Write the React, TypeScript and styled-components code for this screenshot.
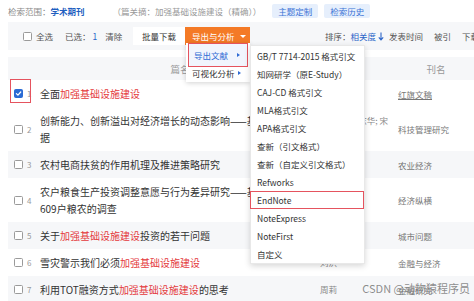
import React from 'react';
import styled, { createGlobalStyle } from 'styled-components';

const GlobalStyle = createGlobalStyle`
  html, body { margin: 0; padding: 0; background: #fff; }
  body {
    width: 474px; height: 301px; overflow: hidden;
    font-family: "Noto Sans CJK SC", "Noto Sans", sans-serif;
    color: #333;
  }
`;

const Page = styled.div`
  position: relative;
  width: 474px;
  height: 301px;
  overflow: hidden;
`;

/* ---------- top line ---------- */
const TopBar = styled.div`
  height: 22px;
  display: flex;
  align-items: center;
  padding-left: 8px;
  font-size: 8.5px;
  color: #8a8a8a;
  white-space: nowrap;
`;
const Scope = styled.span`
  color: #1f5fbf;
  font-weight: 700;
`;
const Query = styled.span`
  margin-left: 28px;
  color: #999;
`;
const TagButton = styled.span<{ $ml: number }>`
  display: inline-flex;
  align-items: center;
  height: 14px;
  padding: 0 6px;
  margin-left: ${p => p.$ml}px;
  background: #e6effc;
  color: #3b73d6;
  border-radius: 2px;
`;

/* ---------- toolbar ---------- */
const Toolbar = styled.div`
  margin-left: 8px;
  height: 28px;
  background: #f6f7f9;
  display: flex;
  align-items: center;
  padding-left: 15px;
  font-size: 8.5px;
  color: #555;
  white-space: nowrap;
`;
const SelectGroup = styled.div`
  width: 110px;
  flex-shrink: 0;
  display: flex;
  align-items: center;
`;
const Box = styled.span<{ $checked?: boolean }>`
  width: 9px;
  height: 9px;
  box-sizing: border-box;
  border: 1px solid ${p => (p.$checked ? '#2a6bd4' : '#9a9a9a')};
  background: ${p => (p.$checked ? '#2a6bd4' : '#fff')};
  border-radius: 1.5px;
  display: inline-flex;
  align-items: center;
  justify-content: center;
  flex-shrink: 0;
`;
const ToolText = styled.span<{ $ml?: number; $blue?: boolean }>`
  margin-left: ${p => p.$ml ?? 0}px;
  color: ${p => (p.$blue ? '#2a64c8' : '#555')};
`;
const BatchButton = styled.span`
  width: 52px;
  height: 18px;
  flex-shrink: 0;
  background: #fff;
  display: inline-flex;
  align-items: center;
  justify-content: center;
  color: #333;
  font-size: 8.5px;
`;
const ExportWrap = styled.div`
  position: relative;
  flex-shrink: 0;
  z-index: 5;
`;
const ExportButton = styled.span`
  width: 65px;
  height: 18px;
  box-sizing: border-box;
  padding-left: 7px;
  background: #f47a26;
  color: #fff;
  display: flex;
  align-items: center;
`;
const Caret = styled.span<{ $dir: 'down' | 'right'; $color: string; $ml: number }>`
  display: inline-block;
  width: 0;
  height: 0;
  margin-left: ${p => p.$ml}px;
  ${p =>
    p.$dir === 'down'
      ? `border-left: 3px solid transparent; border-right: 3px solid transparent; border-top: 3.5px solid ${p.$color};`
      : `border-top: 2.5px solid transparent; border-bottom: 2.5px solid transparent; border-left: 3px solid ${p.$color};`}
`;
const Menu = styled.div`
  position: absolute;
  top: calc(100% - 2px);
  left: 1px;
  width: 64px;
  padding-bottom: 3px;
  background: #fff;
  box-shadow: 0 1px 5px rgba(0, 0, 0, 0.18);
`;
const MenuItem = styled.div<{ $active?: boolean }>`
  height: ${p => (p.$active ? 24 : 12)}px;
  box-sizing: border-box;
  display: flex;
  align-items: center;
  padding-left: ${p => (p.$active ? 5 : 6)}px;
  margin: ${p => (p.$active ? '0 2px' : '0')};
  border: ${p => (p.$active ? '1px solid #e5535e' : 'none')};
  background: ${p => (p.$active ? '#f1f5fd' : 'transparent')};
  color: ${p => (p.$active ? '#2f6bd4' : '#333')};
  font-size: 8.5px;
`;
const SubMenu = styled.div`
  position: absolute;
  left: 100%;
  top: 2px;
  width: 115px;
  box-sizing: border-box;
  padding-top: 1px;
  background: #fff;
  border: 1px solid #e8e8e8;
  box-shadow: 0 2px 6px rgba(0, 0, 0, 0.16);
`;
const SubItem = styled.div<{ $marked?: boolean }>`
  height: 18px;
  box-sizing: border-box;
  display: flex;
  align-items: center;
  padding-left: 6px;
  margin-left: ${p => (p.$marked ? '-1px' : '0')};
  border: ${p => (p.$marked ? '1px solid #e5535e' : 'none')};
  font-size: 8.5px;
  color: #333;
`;
const SortGroup = styled.div`
  margin-left: 75px;
  display: flex;
  align-items: center;
  color: #555;
`;
const SortItem = styled.span<{ $ml?: number; $active?: boolean }>`
  margin-left: ${p => p.$ml ?? 0}px;
  color: ${p => (p.$active ? '#2a64c8' : '#555')};
  display: inline-flex;
  align-items: center;
`;

/* ---------- table ---------- */
const Table = styled.div`
  margin: 7px 0 0 8px;
`;
const Grid = styled.div<{ $striped?: boolean }>`
  display: grid;
  grid-template-columns: 32px 280px 78px 1fr;
  background: ${p => (p.$striped ? '#f6f7f9' : '#fff')};
`;
const HeadCell = styled.div<{ $start?: boolean }>`
  height: 23px;
  display: flex;
  align-items: center;
  justify-content: ${p => (p.$start ? 'flex-start' : 'center')};
  padding-left: ${p => (p.$start ? 16 : 0)}px;
  font-size: 9.5px;
  color: #999;
`;
const CheckCell = styled.div`
  position: relative;
  display: flex;
  align-items: center;
  padding-left: 6px;
`;
const Num = styled.span`
  margin-left: 4px;
  font-size: 8px;
  color: #999;
`;
const Annotation = styled.span`
  position: absolute;
  left: 2px;
  top: -1px;
  width: 21px;
  height: 24px;
  box-sizing: border-box;
  border: 1px solid #e5535e;
`;
const TitleCell = styled.div`
  padding: 5px 0;
  font-size: 10px;
  line-height: 17px;
  color: #333;
`;
const Hl = styled.span`
  color: #e4393c;
`;
const AuthorCell = styled.div`
  padding: 5px 6px 5px 0;
  display: flex;
  align-items: center;
  font-size: 8.5px;
  line-height: 17px;
  color: #888;
`;
const SourceCell = styled.div<{ $link?: boolean }>`
  display: flex;
  align-items: center;
  font-size: 8.5px;
  color: #777;
  text-decoration: ${p => (p.$link ? 'underline' : 'none')};
  white-space: nowrap;
`;
const Watermark = styled.div`
  position: absolute;
  right: 4px;
  bottom: 5px;
  font-size: 11px;
  color: rgba(120, 120, 120, 0.85);
  white-space: nowrap;
`;

const Check = () => (
  <svg width="7" height="7" viewBox="0 0 10 10">
    <path d="M2 5.2 L4.2 7.3 L8.2 2.8" fill="none" stroke="#fff" strokeWidth="1.8" strokeLinecap="round" strokeLinejoin="round" />
  </svg>
);

const DownArrow = () => (
  <svg width="6" height="9" viewBox="0 0 6 9" style={{ marginLeft: 2 }}>
    <path d="M3 0.5 V7.5 M0.8 5.3 L3 7.8 L5.2 5.3" fill="none" stroke="#2a64c8" strokeWidth="1.1" />
  </svg>
);

const HL = '加强基础设施建设';

type RowData = {
  n: number;
  title: React.ReactNode;
  author: string;
  source: string;
  link?: boolean;
  checked?: boolean;
  striped?: boolean;
};

const rows: RowData[] = [
  { n: 1, title: <>全面<Hl>{HL}</Hl></>, author: '本刊评论员', source: '红旗文稿', link: true, checked: true },
  { n: 2, title: '创新能力、创新溢出对经济增长的动态影响——基于省际面板数据', author: '杨武; 欧阳志华; 宋丽', source: '科技管理研究' },
  { n: 3, title: '农村电商扶贫的作用机理及推进策略研究', author: '王瑞峰', source: '农业经济', striped: true },
  { n: 4, title: '农户粮食生产投资调整意愿与行为差异研究——基于山东省三市609户粮农的调查', author: '李明', source: '经济纵横' },
  { n: 5, title: <>关于<Hl>{HL}</Hl>投资的若干问题</>, author: '张伟', source: '城市问题', striped: true },
  { n: 6, title: <>雪灾警示我们必须<Hl>{HL}</Hl></>, author: '刘洪', source: '金融与经济' },
  { n: 7, title: <>利用TOT融资方式<Hl>{HL}</Hl>的思考</>, author: '周莉', source: '金融研究', striped: true },
];

const subItems = [
  'GB/T 7714-2015 格式引文',
  '知网研学（原E-Study）',
  'CAJ-CD 格式引文',
  'MLA格式引文',
  'APA格式引文',
  '查新（引文格式）',
  '查新（自定义引文格式）',
  'Refworks',
  'EndNote',
  'NoteExpress',
  'NoteFirst',
  '自定义',
];

export default function App() {
  return (
    <Page>
      <GlobalStyle />
      <TopBar>
        <span>检索范围：</span>
        <Scope>学术期刊</Scope>
        <Query>（篇关摘：加强基础设施建设（精确））</Query>
        <TagButton $ml={11}>主题定制</TagButton>
        <TagButton $ml={6}>检索历史</TagButton>
      </TopBar>

      <Toolbar>
        <SelectGroup>
          <Box />
          <ToolText $ml={4}>全选</ToolText>
          <ToolText $ml={12}>已选：</ToolText>
          <ToolText $ml={2} $blue>1</ToolText>
          <ToolText $ml={8}>清除</ToolText>
        </SelectGroup>
        <BatchButton>批量下载</BatchButton>
        <ExportWrap>
          <ExportButton>
            导出与分析
            <Caret $dir="down" $color="#fff" $ml={5} />
          </ExportButton>
          <Menu>
            <MenuItem $active>
              导出文献
              <Caret $dir="right" $color="#2f6bd4" $ml={9} />
            </MenuItem>
            <MenuItem>
              可视化分析
              <Caret $dir="right" $color="#2f6bd4" $ml={3} />
            </MenuItem>
            <SubMenu>
              {subItems.map(s => (
                <SubItem key={s} $marked={s === 'EndNote'}>{s}</SubItem>
              ))}
            </SubMenu>
          </Menu>
        </ExportWrap>
        <SortGroup>
          <SortItem>排序：</SortItem>
          <SortItem $active>相关度<DownArrow /></SortItem>
          <SortItem $ml={5}>发表时间</SortItem>
          <SortItem $ml={11}>被引</SortItem>
          <SortItem $ml={11}>下载</SortItem>
        </SortGroup>
      </Toolbar>

      <Table>
        <Grid $striped>
          <HeadCell />
          <HeadCell>篇名</HeadCell>
          <HeadCell $start>作者</HeadCell>
          <HeadCell>刊名</HeadCell>
        </Grid>
        {rows.map(r => (
          <Grid key={r.n} $striped={r.striped}>
            <CheckCell>
              <Box $checked={r.checked}>{r.checked && <Check />}</Box>
              <Num>{r.n}</Num>
              {r.checked && <Annotation />}
            </CheckCell>
            <TitleCell>{r.title}</TitleCell>
            <AuthorCell>{r.author}</AuthorCell>
            <SourceCell $link={r.link}>{r.source}</SourceCell>
          </Grid>
        ))}
      </Table>

      <Watermark>CSDN @动物猿程序员</Watermark>
    </Page>
  );
}
